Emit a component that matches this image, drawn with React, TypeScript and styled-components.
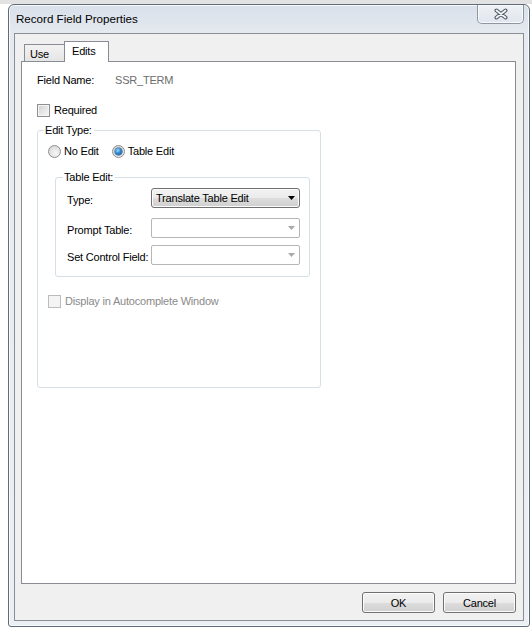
import React from "react";
import styled, { createGlobalStyle, css } from "styled-components";

const Global = createGlobalStyle`
  html, body { margin: 0; padding: 0; }
  body {
    width: 532px;
    height: 634px;
    overflow: hidden;
    background: #f3f3f3;
    font-family: "Liberation Sans", Arial, sans-serif;
  }
`;

const Page = styled.div`
  width: 532px;
  height: 634px;
  padding: 4px 0 0 8px;
  box-sizing: border-box;
  background: linear-gradient(to bottom, #e2e2e2 0, #e2e2e2 4px, #ffffff 4px);
`;

const Window = styled.div`
  width: 522px;
  height: 623px;
  box-sizing: border-box;
  border: 1px solid #5f6b78;
  border-radius: 6px 6px 3px 3px;
  background: linear-gradient(to bottom, #d9e0ea 0, #e6eaf0 30px, #eceff3 100%);
  box-shadow: inset 0 0 0 1px #f7f9fb;
  padding: 0 5px 5px 5px;
  display: flex;
  flex-direction: column;
`;

const TitleBar = styled.div`
  height: 28px;
  display: flex;
  justify-content: space-between;
  align-items: center;
  padding-left: 2px;
`;

const Title = styled.span`
  font-family: "Liberation Sans", Arial, sans-serif;
  font-size: 11.6px;
  color: #000;
  margin-top: -1px;
`;

const CloseButton = styled.div`
  align-self: flex-start;
  width: 47px;
  height: 19px;
  box-sizing: border-box;
  border: 1px solid #8c96a3;
  border-top: none;
  border-radius: 0 0 5px 5px;
  background: linear-gradient(to bottom, #eef1f5, #e1e6ed);
  box-shadow: inset 0 0 0 1px #f8fafc;
  display: flex;
  align-items: center;
  justify-content: center;
`;

const Client = styled.div`
  flex: 1;
  border: 1px solid #8a8f96;
  background: #f0f0f0;
  padding: 7px 7px 7px 6px;
  display: flex;
  flex-direction: column;
  min-height: 0;
`;

const TabStrip = styled.div`
  display: flex;
  align-items: flex-end;
  height: 20px;
  padding-left: 3px;
  position: relative;
  z-index: 1;
`;

const Tab = styled.div<{ $active?: boolean }>`
  box-sizing: border-box;
  font-size: 11px;
  letter-spacing: -0.2px;
  color: #000;
  border: 1px solid #898c95;
  border-bottom: none;
  ${(p) =>
    p.$active
      ? css`
          width: 45px;
          height: 21px;
          margin-bottom: -1px;
          background: #fff;
          padding: 3px 0 0 7px;
        `
      : css`
          width: 40px;
          height: 17px;
          border-right: none;
          background: linear-gradient(to bottom, #f2f2f2, #e5e5e5);
          padding: 3px 0 0 5px;
        `}
`;

const Panel = styled.div`
  flex: 1;
  background: #fff;
  border: 1px solid #898c95;
  padding: 12px 15px 0 15px;
  display: flex;
  flex-direction: column;
  align-items: flex-start;
`;

const Text = styled.span<{ $muted?: boolean; $disabled?: boolean }>`
  font-size: 11px;
  letter-spacing: -0.2px;
  line-height: 13px;
  color: ${(p) => (p.$disabled ? "#8a8a8a" : p.$muted ? "#6d6d6d" : "#000")};
  white-space: nowrap;
`;

const FieldRow = styled.div`
  display: flex;
  align-items: center;
  height: 13px;
`;

const FieldLabel = styled(Text)`
  width: 78px;
`;

const CheckRow = styled.label<{ $top: number }>`
  display: flex;
  align-items: center;
  gap: 4px;
  height: 13px;
  margin-top: ${(p) => p.$top}px;
`;

const CheckBox = styled.span<{ $disabled?: boolean }>`
  width: 13px;
  height: 13px;
  box-sizing: border-box;
  border: 1px solid ${(p) => (p.$disabled ? "#bcbcbc" : "#8e8f8f")};
  background: ${(p) =>
    p.$disabled
      ? "#f4f4f4"
      : "linear-gradient(135deg, #cfcfcf 0%, #e6e6e6 50%, #f7f7f7 100%)"};
  box-shadow: inset 0 0 0 1px #f4f4f4;
  flex: none;
`;

const Group = styled.fieldset<{ $width: number; $left: number; $top: number }>`
  box-sizing: border-box;
  width: ${(p) => p.$width}px;
  margin: ${(p) => p.$top}px 0 0 ${(p) => p.$left}px;
  border: 1px solid #d5dfe5;
  border-radius: 3px;
  min-width: 0;
  display: flex;
  flex-direction: column;
  align-items: flex-start;
`;

const Legend = styled.legend`
  font-size: 11px;
  letter-spacing: -0.2px;
  line-height: 13px;
  color: #000;
  padding: 0 2px 0 1px;
  margin-left: -4px;
`;

const EditTypeGroup = styled(Group)`
  padding: 8px 10px 79px 10px;
`;

const TableEditGroup = styled(Group)`
  padding: 4px 9px 11px 11px;
  & > legend {
    margin-left: -4px;
  }
`;

const RadioRow = styled.div`
  display: flex;
  align-items: center;
  gap: 13px;
  height: 13px;
`;

const RadioItem = styled.label`
  display: flex;
  align-items: center;
  gap: 3px;
`;

const Radio = styled.span<{ $checked?: boolean }>`
  width: 13px;
  height: 13px;
  box-sizing: border-box;
  border-radius: 50%;
  border: 1px solid #8e8f8f;
  background: radial-gradient(circle at 60% 65%, #f6f6f6 0%, #e2e2e2 55%, #cdcdcd 100%);
  display: flex;
  align-items: center;
  justify-content: center;
  flex: none;
  &::after {
    content: "";
    display: ${(p) => (p.$checked ? "block" : "none")};
    width: 7px;
    height: 7px;
    border-radius: 50%;
    background: radial-gradient(circle at 40% 35%, #9fdcff 0%, #2a88d8 45%, #0c4784 100%);
    box-shadow: 0 0 0 0.5px #24446a;
  }
`;

const FormRow = styled.div<{ $top: number }>`
  display: grid;
  grid-template-columns: 84px 149px;
  align-items: center;
  margin-top: ${(p) => p.$top}px;
`;

const FormLabel = styled(Text)`
  padding-top: 5px;
`;

const Combo = styled.div<{ $disabled?: boolean; $h: number }>`
  box-sizing: border-box;
  height: ${(p) => p.$h}px;
  display: flex;
  align-items: center;
  justify-content: space-between;
  padding: 0 4px 0 4px;
  font-size: 11px;
  ${(p) =>
    p.$disabled
      ? css`
          border: 1px solid #b3b7ba;
          border-radius: 2px;
          background: #fff;
        `
      : css`
          border: 1px solid #707070;
          border-radius: 3px;
          background: linear-gradient(
            to bottom,
            #f2f2f2 0%,
            #ebebeb 50%,
            #dddddd 51%,
            #cfcfcf 100%
          );
          box-shadow: inset 0 0 0 1px #fcfcfc;
        `}
`;

const Footer = styled.div`
  display: flex;
  justify-content: flex-end;
  gap: 8px;
  margin-top: 8px;
`;

const Button = styled.div`
  width: 73px;
  height: 21px;
  box-sizing: border-box;
  border: 1px solid #707070;
  border-radius: 3px;
  background: linear-gradient(to bottom, #f2f2f2 0%, #ebebeb 50%, #dddddd 51%, #cfcfcf 100%);
  box-shadow: inset 0 0 0 1px #fcfcfc;
  display: flex;
  align-items: center;
  justify-content: center;
  font-size: 11px;
  letter-spacing: -0.2px;
  color: #000;
`;

const Arrow = ({ color }: { color: string }) => (
  <svg width="7" height="4" viewBox="0 0 7 4">
    <polygon points="0,0 7,0 3.5,4" fill={color} />
  </svg>
);

const CloseGlyph = () => (
  <svg width="14" height="12" viewBox="0 0 14 12">
    <path d="M2.5 2.5 L11.5 9.5 M11.5 2.5 L2.5 9.5" stroke="#4f5a66" strokeWidth="4" strokeLinecap="round" />
    <path d="M2.5 2.5 L11.5 9.5 M11.5 2.5 L2.5 9.5" stroke="#f4f6f8" strokeWidth="1.8" strokeLinecap="round" />
  </svg>
);

export default function App() {
  return (
    <>
      <Global />
      <Page>
        <Window>
          <TitleBar>
            <Title>Record Field Properties</Title>
            <CloseButton>
              <CloseGlyph />
            </CloseButton>
          </TitleBar>
          <Client>
            <TabStrip>
              <Tab>Use</Tab>
              <Tab $active>Edits</Tab>
            </TabStrip>
            <Panel>
              <FieldRow>
                <FieldLabel>Field Name:</FieldLabel>
                <Text $muted>SSR_TERM</Text>
              </FieldRow>
              <CheckRow $top={17}>
                <CheckBox />
                <Text>Required</Text>
              </CheckRow>
              <EditTypeGroup $width={284} $left={0} $top={7}>
                <Legend>Edit Type:</Legend>
                <RadioRow>
                  <RadioItem>
                    <Radio />
                    <Text>No Edit</Text>
                  </RadioItem>
                  <RadioItem>
                    <Radio $checked />
                    <Text>Table Edit</Text>
                  </RadioItem>
                </RadioRow>
                <TableEditGroup $width={255} $left={7} $top={13}>
                  <Legend>Table Edit:</Legend>
                  <FormRow $top={0}>
                    <FormLabel>Type:</FormLabel>
                    <Combo $h={20}>
                      <Text>Translate Table Edit</Text>
                      <Arrow color="#000" />
                    </Combo>
                  </FormRow>
                  <FormRow $top={10}>
                    <FormLabel>Prompt Table:</FormLabel>
                    <Combo $disabled $h={20}>
                      <span />
                      <Arrow color="#a9a9a9" />
                    </Combo>
                  </FormRow>
                  <FormRow $top={7}>
                    <FormLabel>Set Control Field:</FormLabel>
                    <Combo $disabled $h={20}>
                      <span />
                      <Arrow color="#a9a9a9" />
                    </Combo>
                  </FormRow>
                </TableEditGroup>
                <CheckRow $top={18}>
                  <CheckBox $disabled />
                  <Text $disabled>Display in Autocomplete Window</Text>
                </CheckRow>
              </EditTypeGroup>
            </Panel>
            <Footer>
              <Button>OK</Button>
              <Button>Cancel</Button>
            </Footer>
          </Client>
        </Window>
      </Page>
    </>
  );
}
